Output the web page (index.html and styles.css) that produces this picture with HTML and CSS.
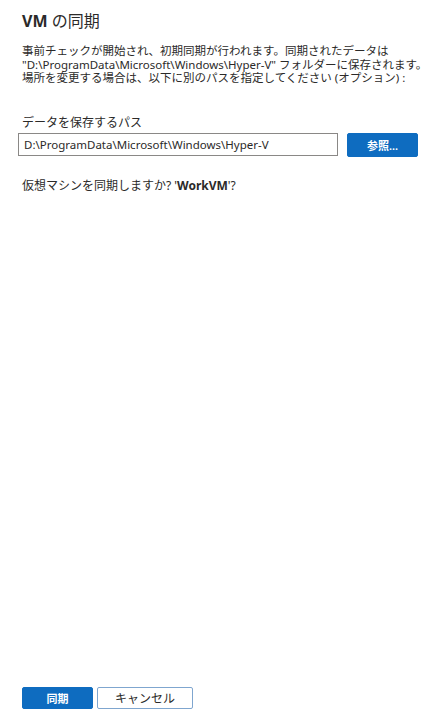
FILE: index.html
```html
<!DOCTYPE html>
<html lang="ja">
<head>
    <meta charset="utf-8">
    <title>VM の同期</title>
    <link rel="stylesheet" href="styles.css">
</head>
<body>
    <div class="panel">
        <h1 class="title">VM <span class="title-rest">の同期</span></h1>

        <p class="intro">
            事前チェックが開始され、初期同期が行われます。同期されたデータは<br>
            "D:\ProgramData\Microsoft\Windows\Hyper-V" フォルダーに保存されます。<br>
            場所を変更する場合は、以下に別のパスを指定してください (オプション) :
        </p>

        <div class="field">
            <label class="field-label" for="path">データを保存するパス</label>
            <div class="field-row">
                <input class="path-input" id="path" type="text" value="D:\ProgramData\Microsoft\Windows\Hyper-V">
                <button class="btn btn-primary btn-browse">参照...</button>
            </div>
        </div>

        <p class="question">仮想マシンを同期しますか? '<b>WorkVM</b>'?</p>

        <div class="actions">
            <button class="btn btn-primary btn-sync">同期</button>
            <button class="btn btn-secondary btn-cancel">キャンセル</button>
        </div>
    </div>
</body>
</html>
```

FILE: styles.css
```css
html, body {
    margin: 0;
    padding: 0;
    background-color: #ffffff;
}

body {
    font-family: "Noto Sans", "Noto Sans CJK JP", sans-serif;
    color: #2b2a29;
    font-size: 12px;
}

.panel {
    height: 712px;
    box-sizing: border-box;
    padding: 10px 22px 3px 22px;
    display: flex;
    flex-direction: column;
}

.title {
    font-size: 16px;
    font-weight: 700;
    line-height: 22px;
    margin: 0;
}

.title-rest {
    font-weight: 400;
}

.intro {
    margin: 12px 0 0 0;
    line-height: 13.5px;
    font-size: 11.5px;
    white-space: nowrap;
}

.field {
    margin-top: 30px;
}

.field-label {
    display: block;
    line-height: 16px;
    font-size: 12px;
}

.field-row {
    display: flex;
    align-items: center;
    gap: 9px;
    margin-top: 2px;
    margin-left: -4px;
}

.path-input {
    width: 321px;
    height: 23px;
    box-sizing: border-box;
    border: 1px solid #8a8886;
    padding: 0 0 0 5px;
    font-family: inherit;
    font-size: 11.5px;
    color: #2b2a29;
    outline: none;
}

.btn {
    font-family: inherit;
    font-size: 11px;
    box-sizing: border-box;
    border-radius: 2px;
    padding: 0;
    cursor: pointer;
}

.btn-primary {
    background-color: #0e6cc0;
    border: 1px solid #0e6cc0;
    color: #ffffff;
    font-weight: 600;
}

.btn-secondary {
    background-color: #ffffff;
    border: 1px solid #7fa6cf;
    color: #2b2a29;
}

.btn-browse {
    width: 71px;
    height: 24px;
}

.question {
    margin: 21px 0 0 0;
    line-height: 16px;
}

.actions {
    margin-top: auto;
    display: flex;
    gap: 4px;
}

.btn-sync {
    width: 71px;
    height: 22px;
}

.btn-cancel {
    width: 96px;
    height: 22px;
    font-size: 12px;
}
```
